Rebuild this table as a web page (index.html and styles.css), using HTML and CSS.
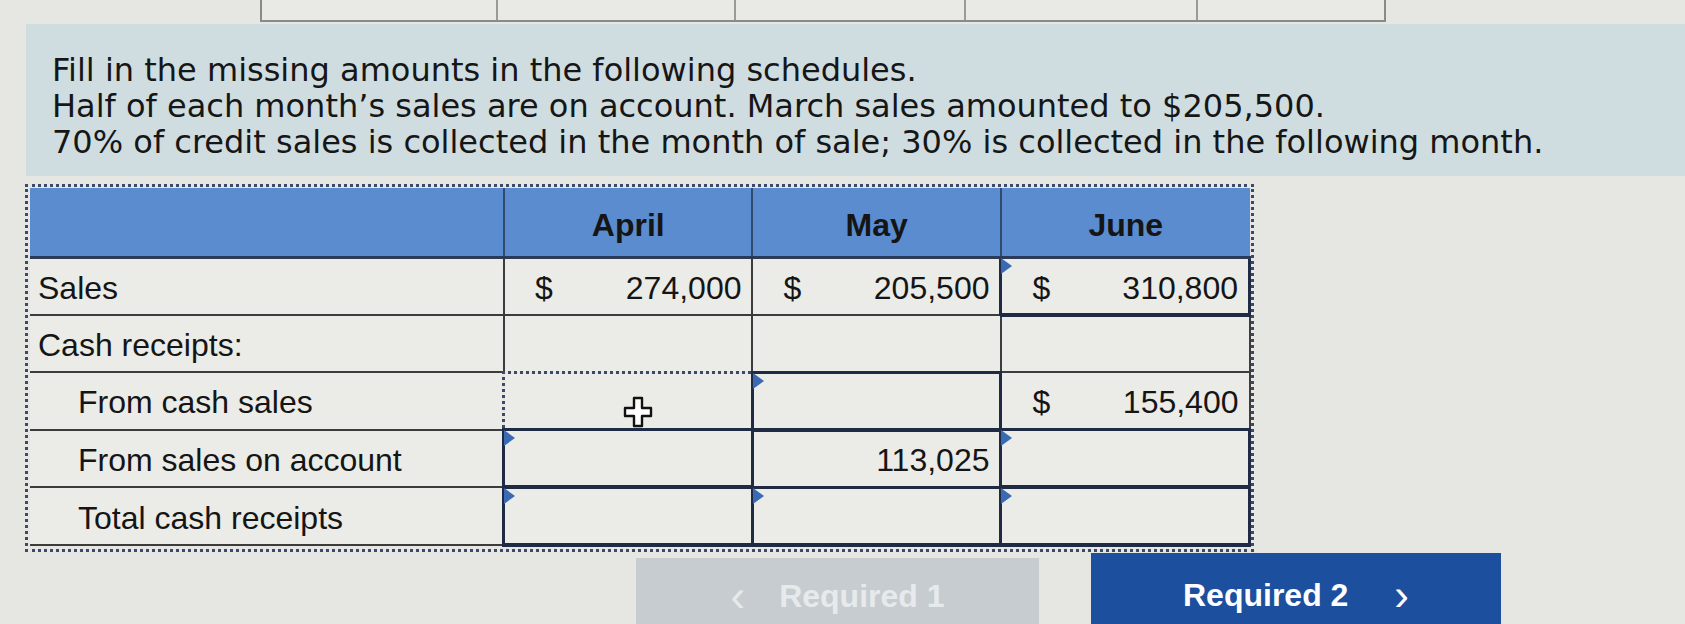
FILE: index.html
```html
<!DOCTYPE html>
<html lang="en">
<head>
<meta charset="utf-8">
<title>Schedule of cash receipts</title>
<link rel="stylesheet" href="styles.css">
</head>
<body>
<div class="page">
  <div class="topstrip">
    <div class="tabbox">
      <span class="tc w1"></span><span class="tc w2"></span><span class="tc w3"></span><span class="tc w4"></span><span class="tc w5"></span>
    </div>
  </div>

  <div class="prompt">
    <p>Fill in the missing amounts in the following schedules.<br>
    Half of each month’s sales are on account. March sales amounted to $205,500.<br>
    70% of credit sales is collected in the month of sale; 30% is collected in the following month.</p>
  </div>

  <div class="tablewrap">
    <table class="sched">
      <colgroup>
        <col class="c-label"><col class="c-month"><col class="c-month"><col class="c-month">
      </colgroup>
      <thead>
        <tr>
          <th></th><th>April</th><th>May</th><th>June</th>
        </tr>
      </thead>
      <tbody>
        <tr>
          <td class="lbl">Sales</td>
          <td><div class="amt"><span>$</span><span>274,000</span></div></td>
          <td><div class="amt"><span>$</span><span>205,500</span></div></td>
          <td class="inp"><span class="flag"></span><div class="amt"><span>$</span><span>310,800</span></div></td>
        </tr>
        <tr>
          <td class="lbl">Cash receipts:</td>
          <td></td><td></td><td></td>
        </tr>
        <tr>
          <td class="lbl ind">From cash sales</td>
          <td class="focus">
            <svg class="cursor" width="30" height="32" viewBox="0 0 30 32" aria-hidden="true">
              <path d="M11 2h8v10h9v8h-9v10h-8V20H2v-8h9z" fill="#fff" stroke="#111" stroke-width="2.4" stroke-linejoin="round"/>
            </svg>
          </td>
          <td class="inp"><span class="flag"></span></td>
          <td><div class="amt"><span>$</span><span>155,400</span></div></td>
        </tr>
        <tr>
          <td class="lbl ind">From sales on account</td>
          <td class="inp"><span class="flag"></span></td>
          <td><div class="amt right"><span>113,025</span></div></td>
          <td class="inp"><span class="flag"></span></td>
        </tr>
        <tr>
          <td class="lbl ind">Total cash receipts</td>
          <td class="inp"><span class="flag"></span></td>
          <td class="inp"><span class="flag"></span></td>
          <td class="inp"><span class="flag"></span></td>
        </tr>
      </tbody>
    </table>
  </div>

  <div class="nav">
    <button class="btn prev" type="button"><span class="chev">‹</span>Required 1</button>
    <button class="btn next" type="button">Required 2<span class="chev">›</span></button>
  </div>
</div>
</body>
</html>
```

FILE: styles.css
```css
html, body {
  margin: 0;
  padding: 0;
}
body {
  width: 1685px;
  height: 624px;
  overflow: hidden;
  background: #e6e6e2;
}
.page {
  display: flex;
  flex-direction: column;
}

/* top strip with partial box */
.topstrip {
  height: 24px;
  padding-left: 260px;
  box-sizing: border-box;
}
.tabbox {
  display: flex;
  width: 1126px;
  height: 22px;
  border: 2px solid #8a8a88;
  border-top: none;
  box-sizing: border-box;
  background: #e9e9e5;
}
.tc {
  height: 100%;
  border-right: 2px solid #9a9a98;
}
.tc.w1 { width: 234px; }
.tc.w2 { width: 236px; }
.tc.w3 { width: 228px; }
.tc.w4 { width: 230px; }
.tc.w5 { flex: 1; border-right: none; }

/* prompt panel */
.prompt {
  margin-left: 26px;
  height: 152px;
  background: #cfdde1;
  padding: 28px 0 0 26px;
  box-sizing: border-box;
}
.prompt p {
  margin: 0;
  font-family: "DejaVu Sans", Verdana, sans-serif;
  font-size: 32px;
  line-height: 36px;
  color: #161616;
}

/* table */
.tablewrap {
  margin: 8px 0 0 25px;
  width: 1229px;
  box-sizing: border-box;
  border: 3px dotted #3b4a68;
  padding: 1px 2px 2px 2px;
}
.sched {
  border-collapse: collapse;
  width: 1221px;
  table-layout: fixed;
  font-family: "Liberation Sans", Arial, sans-serif;
  font-size: 32px;
  color: #151515;
}
.c-label { width: 473px; }
.c-month { width: 248px; }
.sched th {
  height: 62px;
  background: #5a8ccf;
  font-weight: bold;
  text-align: center;
  border-left: 2px solid #324a70;
  border-bottom: 3px solid #2a3a58;
  padding: 6px 0 0 0;
}
.sched th:first-child {
  border-left: none;
}
.sched td {
  height: 50px;
  background: #ebebe7;
  border: 2px solid #3c3c3c;
  padding: 4px 0 0 0;
  position: relative;
}
.sched td.lbl {
  padding-left: 8px;
  border-left: none;
}
.sched td.lbl.ind {
  padding-left: 48px;
}
.sched td.inp {
  border: 3px solid #1f2b45;
  border-bottom-width: 4px;
}
.sched td.focus {
  border: 3px dotted #3b4a68;
}
.amt {
  display: flex;
  justify-content: space-between;
  align-items: center;
  padding: 0 10px 0 30px;
}
.amt.right {
  justify-content: flex-end;
}
.flag {
  position: absolute;
  left: -1px;
  top: -1px;
  width: 0;
  height: 0;
  border-top: 8px solid transparent;
  border-bottom: 8px solid transparent;
  border-left: 11px solid #3a6ab4;
}
.cursor {
  position: absolute;
  left: 118px;
  top: 22px;
}

/* nav buttons */
.nav {
  display: flex;
  gap: 52px;
  margin: 1px 0 0 636px;
  align-items: flex-start;
}
.btn {
  font-family: "Liberation Sans", Arial, sans-serif;
  font-weight: bold;
  font-size: 32px;
  border: none;
  display: flex;
  align-items: center;
  justify-content: center;
}
.btn.prev {
  width: 403px;
  height: 66px;
  padding: 10px 0 0 0;
  margin-top: 5px;
  background: #c6ccd0;
  color: #e6eaec;
}
.btn.next {
  width: 410px;
  height: 72px;
  padding: 12px 0 0 0;
  background: #1c4f9d;
  color: #ffffff;
}
.chev {
  font-weight: normal;
  font-size: 44px;
  line-height: 1;
}
.btn.prev .chev { margin-right: 34px; }
.btn.next .chev { margin-left: 46px; }
```
